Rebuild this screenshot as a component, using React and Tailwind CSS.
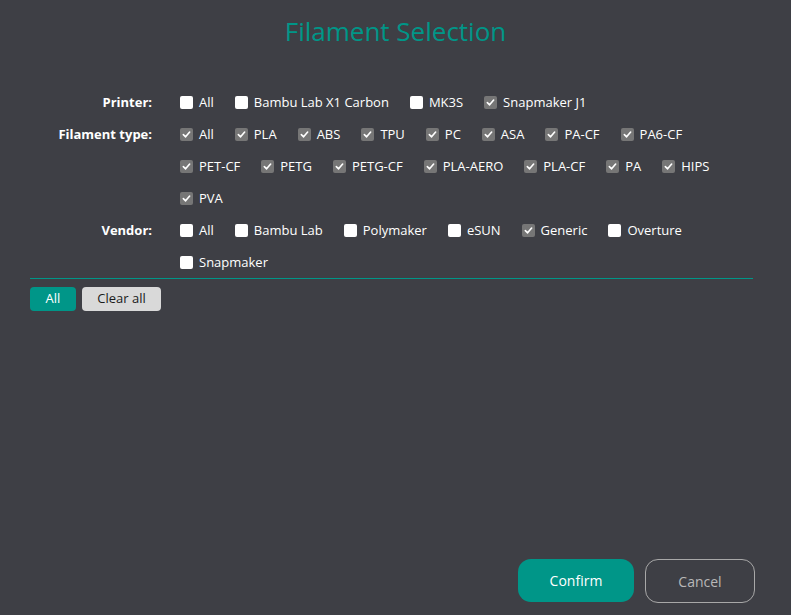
import { useState } from "react";

const FONT = { fontFamily: '"Open Sans", "Noto Sans", sans-serif' };

const initial = {
  printer: [
    ["All", false],
    ["Bambu Lab X1 Carbon", false],
    ["MK3S", false],
    ["Snapmaker J1", true],
  ],
  type: [
    ["All", true],
    ["PLA", true],
    ["ABS", true],
    ["TPU", true],
    ["PC", true],
    ["ASA", true],
    ["PA-CF", true],
    ["PA6-CF", true],
    ["PET-CF", true],
    ["PETG", true],
    ["PETG-CF", true],
    ["PLA-AERO", true],
    ["PLA-CF", true],
    ["PA", true],
    ["HIPS", true],
    ["PVA", true],
  ],
  vendor: [
    ["All", false],
    ["Bambu Lab", false],
    ["Polymaker", false],
    ["eSUN", false],
    ["Generic", true],
    ["Overture", false],
    ["Snapmaker", false],
  ],
};

function Check({ label, checked, onToggle }) {
  return (
    <button
      className="flex items-center h-[32px] pt-px gap-[6px] text-[13px] text-white"
      onClick={onToggle}
    >
      {checked ? (
        <span className="w-[13px] h-[13px] rounded-[2px] bg-[#767676] flex items-center justify-center">
          <svg width="9" height="9" viewBox="0 0 10 10">
            <path
              d="M1.5 5.2 L4 7.6 L8.5 2.3"
              stroke="white"
              strokeWidth="1.8"
              fill="none"
              strokeLinecap="round"
              strokeLinejoin="round"
            />
          </svg>
        </span>
      ) : (
        <span className="w-[13px] h-[13px] rounded-[2px] bg-white" />
      )}
      <span>{label}</span>
    </button>
  );
}

function Row({ title, items, onToggle }) {
  return (
    <>
      <div className="h-[32px] pt-px flex items-center justify-end text-[13px] font-bold text-white">
        {title}
      </div>
      <div className="flex flex-wrap gap-x-[21px]">
        {items.map(([label, checked], i) => (
          <Check
            key={label}
            label={label}
            checked={checked}
            onToggle={() => onToggle(i)}
          />
        ))}
      </div>
    </>
  );
}

export default function App() {
  const [data, setData] = useState(initial);

  function toggle(group, i) {
    setData((prev) => ({
      ...prev,
      [group]: prev[group].map((it, j) => (j === i ? [it[0], !it[1]] : it)),
    }));
  }

  function setAll(value) {
    setData((prev) => {
      const next = {};
      for (const k in prev) next[k] = prev[k].map((it) => [it[0], value]);
      return next;
    });
  }

  return (
    <div className="h-[615px] bg-[#3e3f45] flex flex-col" style={FONT}>
      <h1 className="pt-[12px] h-[86px] text-center text-[26px] text-[#009688]">
        Filament Selection
      </h1>
      <div className="grid grid-cols-[152px_1fr] gap-x-[28px] pr-[36px]">
        <Row title="Printer:" items={data.printer} onToggle={(i) => toggle("printer", i)} />
        <Row title="Filament type:" items={data.type} onToggle={(i) => toggle("type", i)} />
        <Row title="Vendor:" items={data.vendor} onToggle={(i) => toggle("vendor", i)} />
      </div>
      <div className="ml-[30px] mr-[38px] h-px bg-[#009688]" />
      <div className="flex gap-[6px] ml-[30px] mt-[8px]">
        <button
          className="h-[24px] w-[46px] rounded-[4px] bg-[#009688] text-white text-[13px]"
          onClick={() => setAll(true)}
        >
          All
        </button>
        <button
          className="h-[24px] w-[79px] rounded-[4px] bg-[#d9d9d9] text-[#1a1a1a] text-[13px]"
          onClick={() => setAll(false)}
        >
          Clear all
        </button>
      </div>
      <div className="flex-1" />
      <div className="flex justify-end gap-[11px] pr-[36px] pb-[12px]">
        <button className="h-[43px] w-[116px] rounded-[13px] bg-[#009688] text-white text-[14px]">
          Confirm
        </button>
        <button className="h-[44px] w-[110px] rounded-[13px] border border-[#a8a8a8] text-[#b8b8b8] text-[14px]">
          Cancel
        </button>
      </div>
    </div>
  );
}
